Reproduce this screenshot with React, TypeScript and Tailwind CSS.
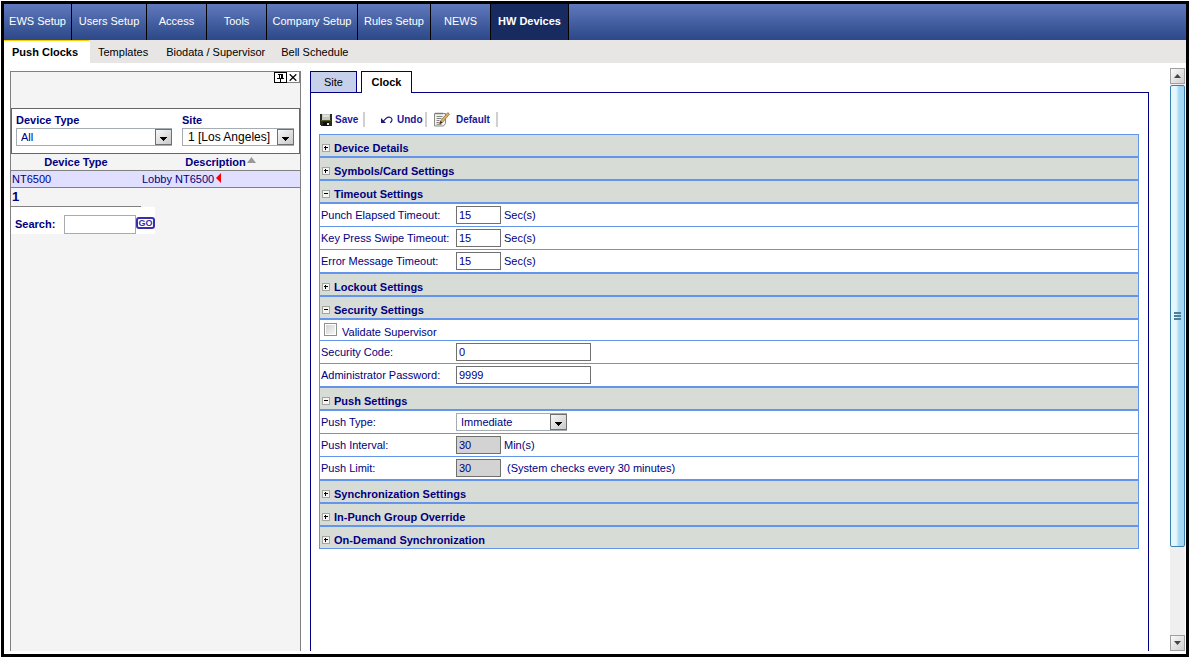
import { useState, type ReactNode } from 'react';

const navItems = [
  { label: 'EWS Setup', width: 'w-[68px]' },
  { label: 'Users Setup', width: 'w-[75px]' },
  { label: 'Access', width: 'w-[60px]' },
  { label: 'Tools', width: 'w-[60px]' },
  { label: 'Company Setup', width: 'w-[91px]' },
  { label: 'Rules Setup', width: 'w-[73px]' },
  { label: 'NEWS', width: 'w-[60px]' },
  { label: 'HW Devices', width: 'w-[78px]', active: true },
];

function ArrowDown() {
  return (
    <svg width="7" height="4" viewBox="0 0 7 4" shapeRendering="crispEdges" aria-hidden="true">
      <path d="M0 0h7v1H0zM1 1h5v1H1zM2 2h3v1H2zM3 3h1v1H3z" fill="#000" />
    </svg>
  );
}

function Select({ id, options, width, text }: { id: string; options: string[]; width: string; text: string }) {
  return (
    <div className={`relative h-[18px] ${width}`}>
      <select
        id={id}
        className={`block h-[18px] w-full appearance-none rounded-none border border-[#a5acb2] bg-white py-0 pr-[18px] outline-none ${text}`}
      >
        {options.map((o) => (
          <option key={o}>{o}</option>
        ))}
      </select>
      <span className="pointer-events-none absolute top-px right-0 flex h-4 w-[17px] items-center justify-center border border-[#707070] bg-linear-to-br from-[#f8f8f8] to-[#c9c9c9] pt-[3px]">
        <ArrowDown />
      </span>
    </div>
  );
}

function Toggle({ open }: { open: boolean }) {
  return (
    <svg width="8" height="8" viewBox="0 0 8 8" shapeRendering="crispEdges" className="shrink-0" aria-hidden="true">
      <path d="M0 0h8v8H0z" fill="#a3a5a1" />
      <path d="M1 1h6v6H1z" fill="#f4f4f4" />
      <path d={open ? 'M2 3h4v1H2z' : 'M2 3h4v1H2zM3 2h1v4H3z'} fill="#000" />
    </svg>
  );
}

function Section({ title, defaultOpen = false, children }: { title: string; defaultOpen?: boolean; children?: ReactNode }) {
  const [open, setOpen] = useState(defaultOpen);
  return (
    <section className="group/section">
      <h2>
        <button
          type="button"
          aria-expanded={open}
          onClick={() => setOpen(!open)}
          className="flex h-[23px] w-full items-start gap-1 border-b-2 border-[#6495ed] bg-[#d8dcd6] pl-0.5 text-left font-bold group-last/section:h-[21px] group-last/section:border-b-0"
        >
          <span className="pt-[9px]">
            <Toggle open={open} />
          </span>
          <span className="pt-[5px] leading-4">{title}</span>
        </button>
      </h2>
      {open && children}
    </section>
  );
}

const rowClass = 'flex h-[23px] items-center border-b border-[#6495ed] pl-px last:h-6 last:border-b-2';

function Field({ id, label, value, suffix, wide, disabled }: { id: string; label: string; value: string; suffix?: string; wide?: boolean; disabled?: boolean }) {
  return (
    <div className={rowClass}>
      <label htmlFor={id} className="w-[135px] shrink-0 whitespace-nowrap">
        {label}
      </label>
      <input
        id={id}
        type="text"
        defaultValue={value}
        disabled={disabled}
        className={`h-[18px] border border-[#707070] bg-white px-0.5 text-[#000080] outline-none disabled:bg-[#d3d3d3] ${wide ? 'w-[135px]' : 'w-[45px]'}`}
      />
      {suffix && <span className={suffix.startsWith('(') ? 'ml-1.5' : 'ml-[3px]'}>{suffix}</span>}
    </div>
  );
}

function SaveIcon() {
  return (
    <svg width="12" height="12" viewBox="0 0 12 12" shapeRendering="crispEdges" aria-hidden="true">
      <path d="M0 0h12v12H1L0 11z" fill="#2c2c1e" />
      <path d="M2 0h8v6H2z" fill="#c3c8c0" />
      <path d="M3 1h6v2H3z" fill="#dfe2dc" />
      <path d="M1 6h10v1H1z" fill="#5c5d26" />
      <path d="M3 8h6v4H3z" fill="#101010" />
      <path d="M7 9h2v2H7z" fill="#e6e6e6" />
    </svg>
  );
}

function UndoIcon() {
  return (
    <svg width="12" height="8" viewBox="0 0 12 8" aria-hidden="true">
      <path d="M0 2v5h5z" fill="#1a1a80" />
      <path d="M2.500 4.800L5.500 2C7 .8 9.500.8 10.500 2.300c.9 1.500.3 3.200-1.300 4.500" fill="none" stroke="#1a1a80" strokeWidth="1.100" />
    </svg>
  );
}

function DefaultIcon() {
  return (
    <svg width="16" height="15" viewBox="0 0 16 15" aria-hidden="true">
      <path d="M.5 1.500h11v10l-2 2.500H.5z" fill="#f3f3f0" stroke="#8a8a84" />
      <path d="M2 .5v2M4 .5v2M6 .5v2M8 .5v2" stroke="#666" strokeWidth=".8" />
      <path d="M2.500 4.500h6M2.500 6.500h5M2.500 8.500h3M2.500 10.500h3M2.500 12.300h5" stroke="#85857e" />
      <path d="M13.800.6l1.700 1.500-7 8.300-2.800 1.500.9-3z" fill="#e4b266" stroke="#7a5a30" strokeWidth=".7" />
      <path d="M6.600 9l1.800 1.400-2.700 1.500z" fill="#222" />
    </svg>
  );
}

function ToolButton({ icon, label, className }: { icon: ReactNode; label: string; className: string }) {
  return (
    <button type="button" className={`flex h-[15px] items-center border-r-2 border-[#d0d0d0] text-[10px] font-bold text-[#1a1a99] ${className}`}>
      {icon}
      {label}
    </button>
  );
}

function ScrollRail() {
  const button = 'flex h-4 shrink-0 items-center justify-center border border-[#a0a0a0] bg-linear-to-br from-[#fafafa] to-[#cfcfcf]';
  return (
    <div className="mt-[5px] mr-px flex w-[15px] shrink-0 flex-col bg-[#efefef]">
      <button type="button" aria-label="Scroll up" className={button}>
        <svg width="7" height="4" viewBox="0 0 7 4" aria-hidden="true">
          <path d="M0 4l3.500-4L7 4z" fill="#444" />
        </svg>
      </button>
      <div className="mt-px flex grow-[84] basis-0 flex-col items-center justify-center gap-px rounded-xs border border-[#3c7fb1] bg-linear-to-r from-[#e6f6fd] from-40% to-[#a5d9f3] to-60%">
        <span className="h-0.5 w-[7px] bg-[#4a8098]" />
        <span className="h-0.5 w-[7px] bg-[#4a8098]" />
        <span className="h-0.5 w-[7px] bg-[#4a8098]" />
      </div>
      <div className="grow-[16] basis-0" />
      <button type="button" aria-label="Scroll down" className={button}>
        <svg width="7" height="4" viewBox="0 0 7 4" aria-hidden="true">
          <path d="M0 0l3.500 4L7 0z" fill="#444" />
        </svg>
      </button>
    </div>
  );
}

function DevicePanel() {
  return (
    <aside className="mt-2 w-[291px] shrink-0 border border-b-0 border-[#808080] bg-[#f4f4f4] text-[#000080]">
      <div className="flex h-9 items-start justify-end">
        <button type="button" aria-label="Pin panel" className="flex h-[11px] w-[13px] items-center justify-center border border-black bg-white">
          <svg width="7" height="8" viewBox="0 0 7 8" shapeRendering="crispEdges" aria-hidden="true">
            <path d="M1 0h5v1H1zM2 1h1v3H2zM4 1h2v3H4zM0 4h7v1H0zM3 5h1v3H3z" fill="#000" />
          </svg>
        </button>
        <button type="button" aria-label="Close panel" className="flex h-[11px] w-[13px] items-center justify-center border-r border-b border-[#808080] bg-white">
          <svg width="8" height="7" viewBox="0 0 8 7" aria-hidden="true">
            <path d="M.7.3l6.600 6.400M7.300.3L.7 6.700" stroke="#000" strokeWidth="1.300" />
          </svg>
        </button>
      </div>
      <div className="flex h-[46px] gap-[10px] border border-[#666] bg-white pt-[3px] pl-1">
        <div>
          <label htmlFor="deviceType" className="block leading-4 font-bold">
            Device Type
          </label>
          <Select id="deviceType" options={['All', 'NT6500']} width="w-[156px]" text="pl-1 text-[11px] text-[#000080]" />
        </div>
        <div>
          <label htmlFor="site" className="block leading-4 font-bold">
            Site
          </label>
          <Select id="site" options={['1 [Los Angeles]']} width="w-[112px]" text="pl-[5px] text-[12px] text-black" />
        </div>
      </div>
      <table className="w-full border-separate border-spacing-0">
        <thead>
          <tr>
            <th className="w-[130px] border-b border-[#808080] p-0 leading-4">Device Type</th>
            <th className="border-b border-[#808080] p-0 leading-4">
              <span className="flex items-start justify-center">
                Description
                <svg width="9" height="6" viewBox="0 0 9 6" className="mt-[3px] ml-px" aria-hidden="true">
                  <path d="M0 6l4.500-6L9 6z" fill="#999" />
                </svg>
              </span>
            </th>
          </tr>
        </thead>
        <tbody>
          <tr className="bg-[#e0dfff]">
            <td className="border-b border-[#808080] p-0 pl-px leading-4">NT6500</td>
            <td className="border-b border-[#808080] p-0 pl-px leading-4">
              <span className="flex items-start">
                Lobby NT6500
                <svg width="5" height="10" viewBox="0 0 5 10" className="mt-0.5 ml-0.5" aria-hidden="true">
                  <path d="M5 0v10L0 5z" fill="#f00" />
                </svg>
              </span>
            </td>
          </tr>
        </tbody>
      </table>
      <div className="h-[19px] w-[130px] border-b border-[#808080] pl-px text-[13px] leading-[18px] font-bold">1</div>
      <form className="flex h-[27px] w-36 items-center bg-white pl-1" onSubmit={(e) => e.preventDefault()}>
        <label htmlFor="search" className="w-[49px] pt-[7px] font-bold">
          Search:
        </label>
        <input id="search" type="text" className="mt-[7px] h-[19px] w-[72px] border border-[#a5acb2] bg-white px-0.5 outline-none" />
        <button type="submit" className="mt-1 h-3 w-[19px] rounded-[3px] border-2 border-[#3a2fa8] bg-white text-[9px] leading-[8px] font-bold text-[#3a2fa8]">
          GO
        </button>
      </form>
    </aside>
  );
}

export default function App() {
  return (
    <div className="flex min-h-screen flex-col bg-white p-px font-['Liberation_Sans',Arial,sans-serif] text-[11px] leading-4">
      <div className="flex grow flex-col border-3 border-black">
        <nav aria-label="Main" className="flex h-9 bg-linear-to-b from-[#6079bd] to-[#2c4888]">
          {navItems.map((item) => (
            <a
              key={item.label}
              href="#"
              className={`flex shrink-0 items-center justify-center border-r border-black pb-0.5 whitespace-nowrap text-white ${item.width} ${item.active ? 'bg-[#182b60] font-bold' : ''}`}
            >
              {item.label}
            </a>
          ))}
        </nav>
        <nav aria-label="Section" className="flex h-[23px] bg-[#e8e6e4] text-black">
          <a href="#" className="flex w-[86px] items-center rounded-tr-xs border-t border-[#fc0] bg-white pl-2 font-bold whitespace-nowrap">
            Push Clocks
          </a>
          <a href="#" className="ml-2 flex items-center pt-px">
            Templates
          </a>
          <a href="#" className="ml-[18px] flex items-center pt-px">
            Biodata / Supervisor
          </a>
          <a href="#" className="ml-4 flex items-center pt-px">
            Bell Schedule
          </a>
        </nav>
        <div className="flex grow pb-[3px] pl-1.5">
          <DevicePanel />
          <main className="mt-2 mr-[21px] ml-[9px] flex min-w-0 grow flex-col text-[#000080]">
            <div className="flex h-[22px] text-black">
              <button type="button" className="w-[47px] border border-[#000080] bg-[#c6d0ea]">
                Site
              </button>
              <span className="w-1 border-b border-[#000080]" />
              <button type="button" className="w-[51px] border border-b-0 border-[#000080] bg-white pb-px font-bold">
                Clock
              </button>
              <span className="grow border-b border-[#000080]" />
            </div>
            <div className="grow border-x border-[#000080] px-[8px] pb-4">
              <div className="flex h-[41px] items-center pt-3 pl-px">
                <ToolButton icon={<SaveIcon />} label="Save" className="w-[45px] gap-[3px]" />
                <ToolButton icon={<UndoIcon />} label="Undo" className="w-[62px] gap-1 pl-4" />
                <ToolButton icon={<DefaultIcon />} label="Default" className="w-[71px] gap-1.5 pl-[7px]" />
              </div>
              <div className="mr-px border border-[#6495ed]">
                <Section title="Device Details" />
                <Section title="Symbols/Card Settings" />
                <Section title="Timeout Settings" defaultOpen>
                  <div>
                    <Field id="punch" label="Punch Elapsed Timeout:" value="15" suffix="Sec(s)" />
                    <Field id="swipe" label="Key Press Swipe Timeout:" value="15" suffix="Sec(s)" />
                    <Field id="error" label="Error Message Timeout:" value="15" suffix="Sec(s)" />
                  </div>
                </Section>
                <Section title="Lockout Settings" />
                <Section title="Security Settings" defaultOpen>
                  <div>
                    <div className="flex h-[21px] items-start border-b border-[#6495ed] pt-[3px] pl-1">
                      <input
                        id="validate"
                        type="checkbox"
                        className="mr-[5px] size-[13px] appearance-none border border-[#8e8f8f] bg-linear-to-br from-[#cfcfcf] to-[#fafafa] ring-1 ring-white ring-inset checked:bg-[#000080]"
                      />
                      <label htmlFor="validate" className="pt-px">
                        Validate Supervisor
                      </label>
                    </div>
                    <Field id="code" label="Security Code:" value="0" wide />
                    <Field id="password" label="Administrator Password:" value="9999" wide />
                  </div>
                </Section>
                <Section title="Push Settings" defaultOpen>
                  <div>
                    <div className={rowClass}>
                      <label htmlFor="pushType" className="w-[135px] shrink-0">
                        Push Type:
                      </label>
                      <Select id="pushType" options={['Immediate', 'Interval']} width="w-[111px]" text="pl-1 text-[11px] text-[#000080]" />
                    </div>
                    <Field id="interval" label="Push Interval:" value="30" suffix="Min(s)" disabled />
                    <Field id="limit" label="Push Limit:" value="30" suffix="(System checks every 30 minutes)" disabled />
                  </div>
                </Section>
                <Section title="Synchronization Settings" />
                <Section title="In-Punch Group Override" />
                <Section title="On-Demand Synchronization" />
              </div>
            </div>
          </main>
          <ScrollRail />
        </div>
      </div>
    </div>
  );
}
